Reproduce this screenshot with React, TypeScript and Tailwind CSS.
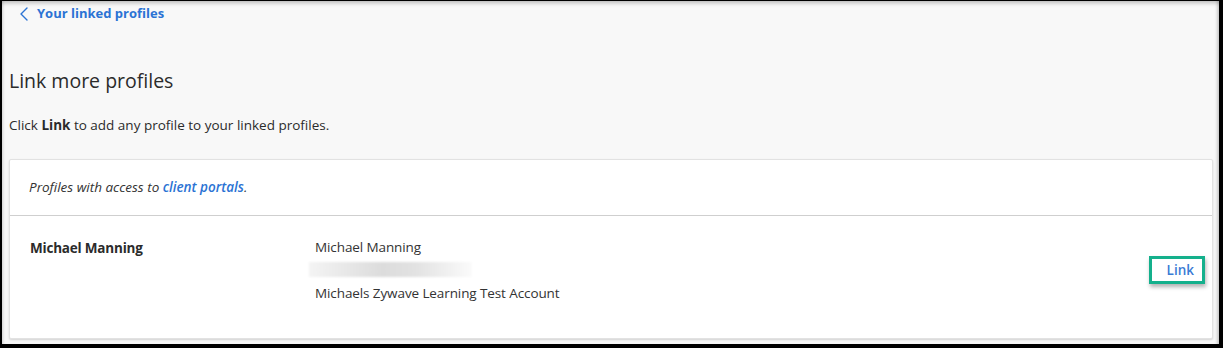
import React from "react";

export default function App() {
  return (
    <div className="w-[1223px] h-[348px] bg-black pl-[2px] pt-[1px] pr-[4px] pb-[4px] overflow-hidden" style={{ fontFamily: '"Open Sans", "Noto Sans", sans-serif' }}>
      <div className="h-full bg-[#f8f8f8] shadow-[inset_0_5px_4px_-3px_rgba(0,0,0,0.25),inset_-4px_0_3px_-2px_rgba(0,0,0,0.18),inset_3px_0_3px_-2px_rgba(0,0,0,0.15)] pl-[7px] pr-[6px] flex flex-col">
        <div className="flex items-center h-[25px] pl-[11px] gap-[9px] text-[#2b73d4]">
          <svg width="8" height="14" viewBox="0 0 8 14" fill="none" className="mt-[1px]">
            <path d="M7 1L1 7l6 6" stroke="#2b73d4" strokeWidth="1.4" strokeLinecap="round" strokeLinejoin="round" />
          </svg>
          <span className="text-[13px] font-bold">Your linked profiles</span>
        </div>
        <h1 className="mt-[42px] text-[19.5px] leading-[26px] text-[#2b2b2b]">Link more profiles</h1>
        <p className="mt-[21px] text-[13.5px] leading-[20px] text-[#2b2b2b]">
          Click <span className="font-bold">Link</span> to add any profile to your linked profiles.
        </p>
        <div className="mt-[24px] bg-white border border-[#e2e2e2] rounded-[2px] shadow-[0_1px_2px_rgba(0,0,0,0.15)] h-[180px] flex flex-col">
          <div className="h-[56px] flex items-center pl-[19px] border-b border-[#cfcfcf]">
            <span className="italic text-[13.5px] text-[#333]">
              Profiles with access to <span className="text-[#2b73d4] font-semibold">client portals</span>.
            </span>
          </div>
          <div className="flex flex-1">
            <div className="w-[299px] pl-[20px] pt-[22px] text-[13.5px] font-bold text-[#2b2b2b] tracking-[-0.2px]">Michael Manning</div>
            <div className="pt-[21px] text-[13.5px] text-[#333] tracking-[-0.1px] flex flex-col">
              <span className="pl-[6px] leading-[20px]">Michael Manning</span>
              <div className="mt-[5px] w-[163px] h-[15px] bg-[linear-gradient(90deg,#f4f4f4_0%,#dcdcdc_45%,#e2e2e2_65%,#fbfbfb_100%)] blur-[1px]" />
              <span className="pl-[6px] mt-[6px] leading-[20px]">Michaels Zywave Learning Test Account</span>
            </div>
            <div className="flex-1" />
            <div className="mr-[7px] self-start mt-[40px] w-[56px] h-[28px] border-[3px] border-[#14b08c] shadow-[1px_3px_4px_rgba(0,0,0,0.3)] flex items-center justify-end pr-[8px]">
              <span className="text-[13.5px] font-semibold text-[#3a7bd5]">Link</span>
            </div>
          </div>
        </div>
      </div>
    </div>
  );
}
